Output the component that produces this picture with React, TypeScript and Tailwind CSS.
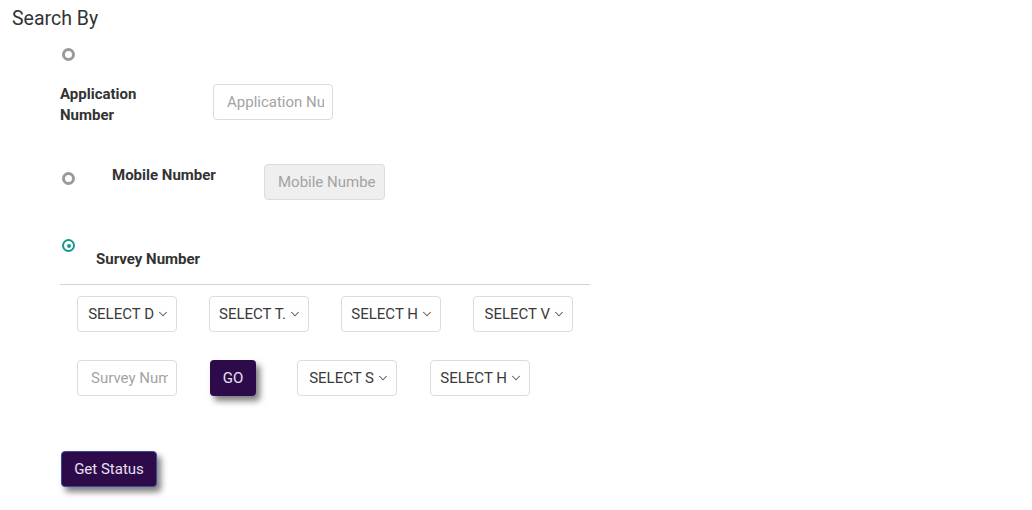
import { ChevronDown } from "lucide-react";

function Radio({ checked = false }: { checked?: boolean }) {
  return checked ? (
    <span className="flex h-[13px] w-[13px] items-center justify-center rounded-full border-[2.5px] border-[#159a8c]">
      <span className="h-[4px] w-[4px] rounded-full bg-[#159a8c]" />
    </span>
  ) : (
    <span className="block h-[13px] w-[13px] rounded-full border-[3px] border-[#9a9a9a] bg-white" />
  );
}

function Select({ label }: { label: string }) {
  return (
    <div className="flex h-[36px] w-[100px] items-center justify-end gap-[2px] rounded-[4px] border border-[#dcdcdc] pr-[6px] text-[15px] text-[#3a3a3a]">
      <span className="whitespace-nowrap">{label}</span>
      <ChevronDown size={14} strokeWidth={1.75} className="text-[#555]" />
    </div>
  );
}

function Input({ placeholder, className = "" }: { placeholder: string; className?: string }) {
  return (
    <div
      className={`flex h-[36px] items-center rounded-[4px] border border-[#dcdcdc] pl-[13px] pr-[8px] text-[15px] text-[#a3a3a3] ${className}`}
    >
      <span className="block overflow-hidden whitespace-nowrap">{placeholder}</span>
    </div>
  );
}

function DarkButton({ children, className = "" }: { children: React.ReactNode; className?: string }) {
  return (
    <div
      className={`flex h-[36px] items-center justify-center rounded-[4px] bg-[#2d0b4a] text-[15px] text-[#e8e0f0] shadow-[4px_5px_6px_rgba(0,0,0,0.5)] ${className}`}
    >
      {children}
    </div>
  );
}

export default function App() {
  return (
    <div className="h-[510px] w-[1032px] bg-white pl-[12px] pt-[6px] font-['Roboto',sans-serif] text-[#222]">
      <div className="text-[19.5px] leading-[25px] text-[#333]">Search By</div>

      <div className="ml-[48px] w-[530px]">
        <div className="mt-[17px] ml-[2px]">
          <Radio />
        </div>

        <div className="mt-[23px] flex items-start">
          <div className="w-[153px] text-[15px] font-bold leading-[21px] text-[#333]">
            Application
            <br />
            Number
          </div>
          <Input placeholder="Application Number" className="w-[120px]" />
        </div>

        <div className="mt-[38px] flex items-start">
          <div className="ml-[2px] mt-[8px]">
            <Radio />
          </div>
          <div className="ml-[37px] mt-[1px] w-[152px] text-[15px] font-bold leading-[20px] text-[#333]">
            Mobile Number
          </div>
          <Input placeholder="Mobile Number" className="w-[121px] bg-[#efefef]" />
        </div>

        <div className="mt-[39px] ml-[2px]">
          <Radio checked />
        </div>
        <div className="ml-[36px] mt-[-3px] text-[15px] font-bold leading-[20px] text-[#333]">
          Survey Number
        </div>

        <div className="mt-[15px] border-t border-[#d4d4d4]" />

        <div className="mt-[11px] ml-[17px] flex gap-[32px]">
          <Select label="SELECT D" />
          <Select label="SELECT T." />
          <Select label="SELECT H" />
          <Select label="SELECT V" />
        </div>

        <div className="mt-[28px] ml-[17px] flex items-center">
          <Input placeholder="Survey Number" className="w-[100px]" />
          <DarkButton className="ml-[33px] w-[46px]">GO</DarkButton>
          <div className="ml-[41px]">
            <Select label="SELECT S" />
          </div>
          <div className="ml-[33px]">
            <Select label="SELECT H" />
          </div>
        </div>

        <div className="mt-[55px] ml-[1px]">
          <DarkButton className="w-[96px] border border-[#3b4a9a]">Get Status</DarkButton>
        </div>
      </div>
    </div>
  );
}
